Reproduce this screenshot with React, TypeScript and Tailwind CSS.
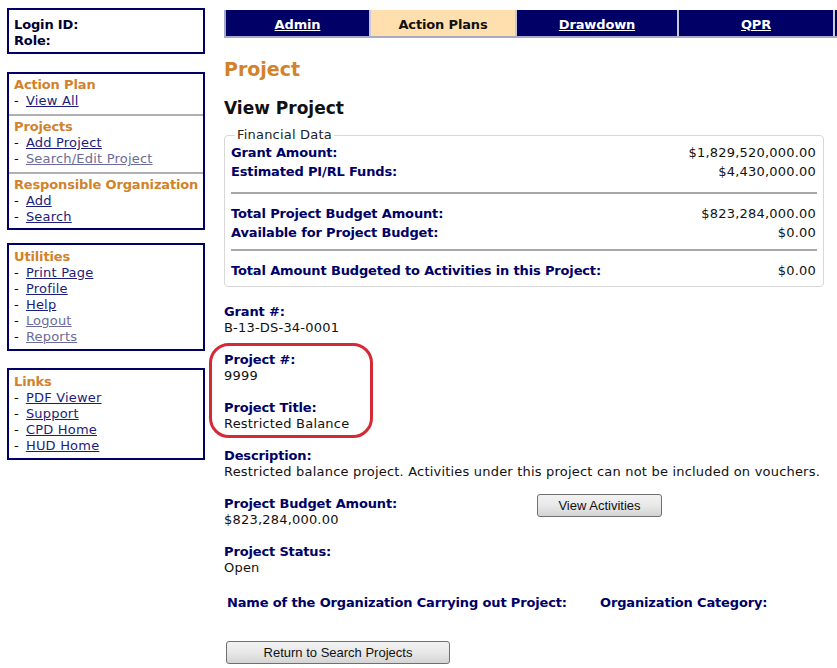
import React from 'react';

const label = 'font-bold tracking-[-0.15px] text-[#000066]';

const SideLink = ({ label, faded }: { label: string; faded?: boolean }) => (
  <div className="whitespace-nowrap">
    -<a href="#" className={`ml-[7px] underline ${faded ? 'text-[#6b6b9a]' : 'text-[#1c1c7c]'}`}>{label}</a>
  </div>
);

const SideHeader = ({ children }: { children: React.ReactNode }) => (
  <div className="whitespace-nowrap font-bold tracking-[-0.15px] text-[#d2822a]">{children}</div>
);

const Box = ({ children, className = '' }: { children: React.ReactNode; className?: string }) => (
  <div className={`border-2 border-[#000066] bg-white ${className}`}>{children}</div>
);

// last tab runs past the window edge, only its left part shows
const tabs = [
  { label: 'Admin', w: 'w-[145px]' },
  { label: 'Action Plans', w: 'w-[146px]', active: true },
  { label: 'Drawdown', w: 'w-[162px]' },
  { label: 'QPR', w: 'w-[156px]' },
  { label: '', w: 'w-[156px]' },
];

const finRows = [
  [
    ['Grant Amount:', '$1,829,520,000.00'],
    ['Estimated PI/RL Funds:', '$4,430,000.00'],
  ],
  [
    ['Total Project Budget Amount:', '$823,284,000.00'],
    ['Available for Project Budget:', '$0.00'],
  ],
  [['Total Amount Budgeted to Activities in this Project:', '$0.00']],
];

const Field = ({ name, value }: { name: string; value: string }) => (
  <div>
    <div className={label}>{name}</div>
    <div className="text-[#111]">{value}</div>
  </div>
);

const GrayButton = ({ children, className = '' }: { children: React.ReactNode; className?: string }) => (
  <button
    className={`h-[23px] rounded-[3px] border border-[#707070] bg-gradient-to-b from-[#f2f2f2] via-[#e8e8e8] to-[#d4d4d4] text-[13px] tracking-normal text-[#111] ${className}`}
    style={{ fontFamily: '"Liberation Sans", Arial, sans-serif' }}
  >
    {children}
  </button>
);

export default function App() {
  return (
    <div
      className="flex h-[668px] w-[837px] overflow-hidden bg-white text-[13px] leading-[16px] tracking-[0.2px] text-[#111]"
      style={{ fontFamily: '"DejaVu Sans", Verdana, sans-serif' }}
    >
      {/* left navigation */}
      <div className="ml-[7px] mt-[8px] flex w-[198px] shrink-0 flex-col">
        <Box className="px-[5px] pb-[3px] pt-[7px] font-bold tracking-[-0.15px] text-[#000033]">
          <div>Login ID:</div>
          <div>Role:</div>
        </Box>

        <Box className="mt-[18px]">
          <div className="px-[5px] pb-[5px] pt-[3px]">
            <SideHeader>Action Plan</SideHeader>
            <SideLink label="View All" />
          </div>
          <div className="border-t-2 border-[#b0b0b0] px-[5px] pb-[5px] pt-[3px]">
            <SideHeader>Projects</SideHeader>
            <SideLink label="Add Project" />
            <SideLink label="Search/Edit Project" faded />
          </div>
          <div className="border-t-2 border-[#b0b0b0] px-[5px] pb-[3px] pt-[3px]">
            <SideHeader>Responsible Organization</SideHeader>
            <SideLink label="Add" />
            <SideLink label="Search" />
          </div>
        </Box>

        <Box className="mt-[13px] px-[5px] pb-[4px] pt-[4px]">
          <SideHeader>Utilities</SideHeader>
          <SideLink label="Print Page" />
          <SideLink label="Profile" />
          <SideLink label="Help" />
          <SideLink label="Logout" faded />
          <SideLink label="Reports" faded />
        </Box>

        <Box className="mt-[17px] px-[5px] pb-[4px] pt-[4px]">
          <SideHeader>Links</SideHeader>
          <SideLink label="PDF Viewer" />
          <SideLink label="Support" />
          <SideLink label="CPD Home" />
          <SideLink label="HUD Home" />
        </Box>
      </div>

      {/* main content */}
      <div className="relative ml-[19px] flex min-w-0 flex-1 flex-col">
        <div className="mt-[10px] flex h-[28px] shrink-0 border-b-2 border-l-2 border-[#a9a9c8]">
          {tabs.map((t, i) => (
            <div
              key={i}
              className={`${t.w} flex shrink-0 items-center justify-center whitespace-nowrap border-r-2 border-[#c8c8d8] pt-[3px] font-bold tracking-[-0.15px] ${
                t.active ? 'bg-[#ffdfad] text-[#111]' : 'bg-[#000066] text-white underline'
              }`}
            >
              {t.label}
            </div>
          ))}
        </div>

        <h1 className="mt-[19px] text-[19px] font-bold leading-[24px] tracking-normal text-[#d2822a]">Project</h1>
        <h2 className="mt-[16px] text-[17px] font-bold leading-[22px] tracking-normal text-[#111]">View Project</h2>

        <fieldset className="mt-[9px] w-[600px] rounded-[4px] border border-[#d8d8d8] px-[6px] pb-[6px]">
          <legend className="ml-[4px] px-[2px] leading-[14px] text-[#222]">Financial Data</legend>
          <div className="pt-[1px]">
            {finRows.map((group, gi) => (
              <div
                key={gi}
                className={
                  gi === 1
                    ? 'mt-[11px] border-t-2 border-[#a8a8a8] pt-[10px]'
                    : gi === 2
                    ? 'mt-[7px] border-t-2 border-[#a8a8a8] pt-[10px]'
                    : ''
                }
              >
                {group.map(([k, v]) => (
                  <div key={k} className="flex h-[19px] items-center justify-between pr-[1px]">
                    <span className={label}>{k}</span>
                    <span className="text-[#111]">{v}</span>
                  </div>
                ))}
              </div>
            ))}
          </div>
        </fieldset>

        <div className="mt-[17px] flex flex-col gap-[16px]">
          <Field name="Grant #:" value="B-13-DS-34-0001" />
          <Field name="Project #:" value="9999" />
          <Field name="Project Title:" value="Restricted Balance" />
          <Field
            name="Description:"
            value="Restricted balance project. Activities under this project can not be included on vouchers."
          />
          <div className="flex items-start">
            <div className="w-[313px]">
              <Field name="Project Budget Amount:" value="$823,284,000.00" />
            </div>
            <GrayButton className="mt-[-2px] w-[125px]">View Activities</GrayButton>
          </div>
          <Field name="Project Status:" value="Open" />
        </div>

        <div className={`mt-[19px] flex whitespace-nowrap ${label}`}>
          <span className="ml-[3px] w-[373px]">Name of the Organization Carrying out Project:</span>
          <span>Organization Category:</span>
        </div>

        <GrayButton className="ml-[2px] mt-[30px] w-[224px]">Return to Search Projects</GrayButton>

        {/* red annotation ring around project number and title */}
        <div className="pointer-events-none absolute left-[-15px] top-[343px] h-[95px] w-[164px] rounded-[20px] border-[3px] border-[#d42a35]" />
      </div>
    </div>
  );
}
